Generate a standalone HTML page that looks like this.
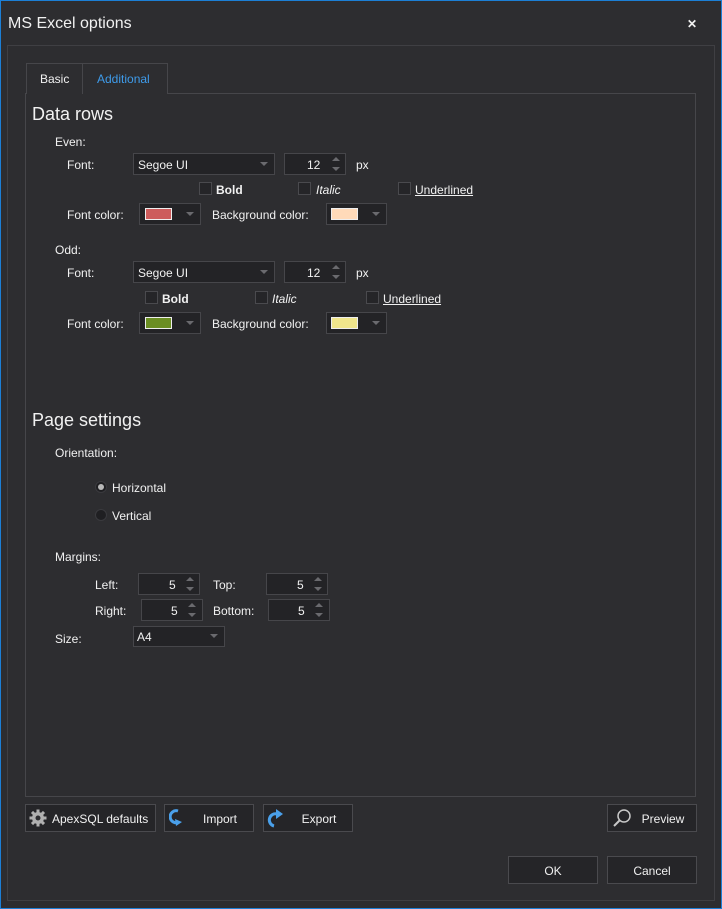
<!DOCTYPE html>
<html><head><meta charset="utf-8"><style>
*{box-sizing:border-box;margin:0;padding:0}
body{width:722px;height:909px;background:#2d2d30;font-family:"Liberation Sans",sans-serif;font-size:12px;color:#f1f1f1;position:relative;overflow:hidden}
.o{position:absolute;left:0;top:0;width:722px;height:909px;border:1px solid #1c7fd6}
.a{position:absolute}
.t{position:absolute;line-height:16px;white-space:nowrap;margin-top:1px}
.box{position:absolute;background:#232326;border:1px solid #46464a}
.arr{position:absolute;width:0;height:0;border-left:4px solid transparent;border-right:4px solid transparent;border-top:4px solid #6a6a6e}
.cb{position:absolute;width:13px;height:13px;border:1px solid #4a4a4e;background:#252528}
.btn{position:absolute;background:#252528;border:1px solid #4a4a4e;height:28px;line-height:28px;text-align:center}
.up{position:absolute;width:0;height:0;border-left:4px solid transparent;border-right:4px solid transparent;border-bottom:4px solid #6a6a6e}
.dn{position:absolute;width:0;height:0;border-left:4px solid transparent;border-right:4px solid transparent;border-top:4px solid #6a6a6e}
</style></head><body>
<div class="o"></div>
<div class="t" style="left:8px;top:13px;font-size:16px;line-height:20px">MS Excel options</div>
<div class="t" style="left:687px;top:14px;font-size:12px;line-height:18px;font-weight:bold">✕</div>
<div class="a" style="left:7px;top:45px;width:708px;height:856px;border:1px solid #3f3f43"></div>
<div class="a" style="left:25px;top:93px;width:671px;height:704px;border:1px solid #46464a"></div>
<div class="a" style="left:26px;top:63px;width:57px;height:31px;border:1px solid #46464a;border-bottom:none;background:#2d2d30"></div>
<div class="t" style="left:40px;top:70px">Basic</div>
<div class="a" style="left:82px;top:63px;width:86px;height:31px;border:1px solid #46464a;border-bottom:none;background:#2d2d30"></div>
<div class="t" style="left:97px;top:70px;color:#3e9bea">Additional</div>

<div class="t" style="left:32px;top:102px;font-size:18px;line-height:22px">Data rows</div>
<div class="t" style="left:55px;top:133px">Even:</div>
<div class="t" style="left:67px;top:156px">Font:</div>
<div class="box" style="left:133px;top:153px;width:142px;height:22px"></div>
<div class="t" style="left:138px;top:156px">Segoe UI</div>
<div class="arr" style="left:260px;top:162px"></div>
<div class="box" style="left:284px;top:153px;width:62px;height:22px"></div>
<div class="t" style="left:307px;top:156px">12</div>
<div class="up" style="left:332px;top:157px"></div><div class="dn" style="left:332px;top:167px"></div>
<div class="t" style="left:356px;top:156px">px</div>
<div class="cb" style="left:199px;top:182px"></div><div class="t" style="left:216px;top:181px;font-weight:bold">Bold</div>
<div class="cb" style="left:298px;top:182px"></div><div class="t" style="left:316px;top:181px;font-style:italic">Italic</div>
<div class="cb" style="left:398px;top:182px"></div><div class="t" style="left:415px;top:181px;text-decoration:underline">Underlined</div>
<div class="t" style="left:67px;top:206px">Font color:</div>
<div class="box" style="left:139px;top:203px;width:62px;height:22px"></div>
<div class="a" style="left:145px;top:208px;width:27px;height:12px;background:#cd5c5c;border:1px solid #eee"></div>
<div class="arr" style="left:186px;top:212px"></div>
<div class="t" style="left:212px;top:206px">Background color:</div>
<div class="box" style="left:326px;top:203px;width:61px;height:22px"></div>
<div class="a" style="left:331px;top:208px;width:27px;height:12px;background:#ffdab9;border:1px solid #eee"></div>
<div class="arr" style="left:372px;top:212px"></div>

<div class="t" style="left:55px;top:241px">Odd:</div>
<div class="t" style="left:67px;top:264px">Font:</div>
<div class="box" style="left:133px;top:261px;width:142px;height:22px"></div>
<div class="t" style="left:138px;top:264px">Segoe UI</div>
<div class="arr" style="left:260px;top:270px"></div>
<div class="box" style="left:284px;top:261px;width:62px;height:22px"></div>
<div class="t" style="left:307px;top:264px">12</div>
<div class="up" style="left:332px;top:265px"></div><div class="dn" style="left:332px;top:275px"></div>
<div class="t" style="left:356px;top:264px">px</div>
<div class="cb" style="left:145px;top:291px"></div><div class="t" style="left:162px;top:290px;font-weight:bold">Bold</div>
<div class="cb" style="left:255px;top:291px"></div><div class="t" style="left:272px;top:290px;font-style:italic">Italic</div>
<div class="cb" style="left:366px;top:291px"></div><div class="t" style="left:383px;top:290px;text-decoration:underline">Underlined</div>
<div class="t" style="left:67px;top:315px">Font color:</div>
<div class="box" style="left:139px;top:312px;width:62px;height:22px"></div>
<div class="a" style="left:145px;top:317px;width:27px;height:12px;background:#6b8e23;border:1px solid #eee"></div>
<div class="arr" style="left:186px;top:321px"></div>
<div class="t" style="left:212px;top:315px">Background color:</div>
<div class="box" style="left:326px;top:312px;width:61px;height:22px"></div>
<div class="a" style="left:331px;top:317px;width:27px;height:12px;background:#f0e68c;border:1px solid #eee"></div>
<div class="arr" style="left:372px;top:321px"></div>

<div class="t" style="left:32px;top:408px;font-size:18px;line-height:22px">Page settings</div>
<div class="t" style="left:55px;top:444px">Orientation:</div>
<div class="a" style="left:95px;top:481px;width:12px;height:12px;border-radius:50%;background:#1f1f22;border:1px solid #3a3a3e"></div>
<div class="a" style="left:98px;top:484px;width:6px;height:6px;border-radius:50%;background:#b8b8b8"></div>
<div class="t" style="left:112px;top:479px">Horizontal</div>
<div class="a" style="left:95px;top:509px;width:12px;height:12px;border-radius:50%;background:#1f1f22;border:1px solid #3a3a3e"></div>
<div class="t" style="left:112px;top:507px">Vertical</div>
<div class="t" style="left:55px;top:548px">Margins:</div>
<div class="t" style="left:95px;top:576px">Left:</div>
<div class="box" style="left:138px;top:573px;width:62px;height:22px"></div>
<div class="t" style="left:169px;top:576px">5</div>
<div class="up" style="left:186px;top:577px"></div><div class="dn" style="left:186px;top:587px"></div>
<div class="t" style="left:213px;top:576px">Top:</div>
<div class="box" style="left:266px;top:573px;width:62px;height:22px"></div>
<div class="t" style="left:297px;top:576px">5</div>
<div class="up" style="left:314px;top:577px"></div><div class="dn" style="left:314px;top:587px"></div>
<div class="t" style="left:95px;top:602px">Right:</div>
<div class="box" style="left:141px;top:599px;width:62px;height:22px"></div>
<div class="t" style="left:171px;top:602px">5</div>
<div class="up" style="left:188px;top:603px"></div><div class="dn" style="left:188px;top:613px"></div>
<div class="t" style="left:213px;top:602px">Bottom:</div>
<div class="box" style="left:268px;top:599px;width:62px;height:22px"></div>
<div class="t" style="left:298px;top:602px">5</div>
<div class="up" style="left:315px;top:603px"></div><div class="dn" style="left:315px;top:613px"></div>
<div class="t" style="left:55px;top:630px">Size:</div>
<div class="box" style="left:133px;top:626px;width:92px;height:21px"></div>
<div class="t" style="left:137px;top:628px">A4</div>
<div class="arr" style="left:210px;top:634px"></div>

<div class="btn" style="left:25px;top:804px;width:131px;text-align:left;padding-left:26px">ApexSQL defaults</div>
<svg class="a" style="left:29px;top:809px" width="18" height="18" viewBox="0 0 18 18"><g fill="#b0b0b0"><circle cx="9" cy="9" r="6"/><rect x="7.5" y="0.5" width="3" height="17"/><rect x="0.5" y="7.5" width="17" height="3"/><rect x="7.5" y="0.5" width="3" height="17" transform="rotate(45 9 9)"/><rect x="7.5" y="0.5" width="3" height="17" transform="rotate(-45 9 9)"/></g><circle cx="9" cy="9" r="2.5" fill="#2d2d30"/></svg>
<div class="btn" style="left:164px;top:804px;width:90px;padding-left:22px">Import</div>
<svg class="a" style="left:169px;top:808px" width="16" height="20" viewBox="0 0 16 20"><path d="M9 3 A6 6 0 1 0 10 14" fill="none" stroke="#4aa0ea" stroke-width="3"/><path d="M6 11 L13 14 L7 18 Z" fill="#4aa0ea"/></svg>
<div class="btn" style="left:263px;top:804px;width:90px;padding-left:22px">Export</div>
<svg class="a" style="left:267px;top:808px" width="18" height="20" viewBox="0 0 18 20"><path d="M7 18 A6 6 0 0 1 10 6" fill="none" stroke="#4aa0ea" stroke-width="3"/><path d="M9 1 L16 6 L9 11 Z" fill="#4aa0ea"/></svg>
<div class="btn" style="left:607px;top:804px;width:90px;padding-left:22px">Preview</div>
<svg class="a" style="left:612px;top:808px" width="20" height="20" viewBox="0 0 20 20"><circle cx="12" cy="8" r="6" fill="none" stroke="#c8c8c8" stroke-width="1.5"/><path d="M8 12 L2 18" stroke="#c8c8c8" stroke-width="2"/></svg>
<div class="btn" style="left:508px;top:856px;width:90px">OK</div>
<div class="btn" style="left:607px;top:856px;width:90px">Cancel</div>
</body></html>
